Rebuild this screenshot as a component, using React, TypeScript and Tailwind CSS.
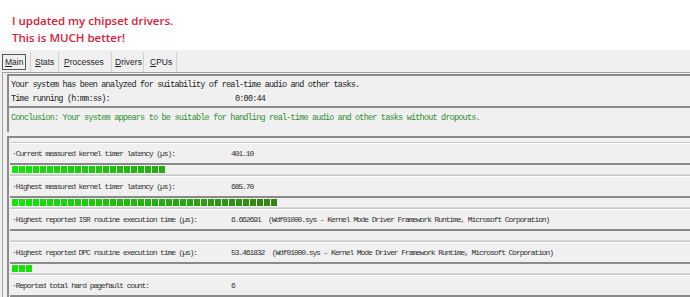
import React from "react";

const mono = { fontFamily: '"Liberation Mono", "DejaVu Sans Mono", monospace' };

function Bar({ n }: { n: number }) {
  const segs = [];
  for (let i = 0; i < n; i++) {
    const t = Math.min(i / 37, 1);
    const r = Math.round(20 + 30 * t);
    const g = Math.round(230 - 100 * t);
    const b = Math.round(10 + 10 * t);
    segs.push(
      <div key={i} className="h-full w-[6px] mr-px" style={{ backgroundColor: `rgb(${r},${g},${b})` }} />
    );
  }
  return (
    <div className="h-[12px] border-t-2 border-t-[#8a8a8a] border-b border-b-[#d8d8d8] bg-[#f0f0f0] flex items-stretch pl-[2px] py-px">
      {segs}
    </div>
  );
}

function Metric({ label, value, extra, bar }: { label: string; value: string; extra?: string; bar?: number }) {
  return (
    <div className="border-t border-t-[#c8c8c8]">
      <div className="border-t border-t-white h-[20px] flex items-center pl-[2px] text-[8px] tracking-[-1.1px] text-[#333]" style={mono}>
        <span className="w-[219px] shrink-0">·{label}</span>
        <span className="whitespace-pre">{value}{extra ? "  " + extra : ""}</span>
      </div>
      {bar !== undefined && <Bar n={bar} />}
    </div>
  );
}

export default function App() {
  return (
    <div className="w-[690px] h-[297px] overflow-hidden bg-white">
      <div className="h-[50px] pl-[12px] pt-[12px] text-[11.5px] font-semibold leading-[17px] text-[#d9203a]" style={{ fontFamily: '"Open Sans", "Noto Sans", sans-serif' }}>
        <div>I updated my chipset drivers.</div>
        <div>This is MUCH better!</div>
      </div>
      <div className="bg-[#f0f0f0] h-[247px]">
        <div className="h-[22px] flex items-end text-[8.5px] text-[#222]" style={{ fontFamily: '"Liberation Sans", Arial, sans-serif' }}>
          <div className="h-[20px] w-[31px] flex items-center pl-[2px] border-r border-r-[#d0d0d0]">
            <span className="border border-[#555] px-[2px] leading-[14px]"><u>M</u>ain</span>
          </div>
          <div className="h-[20px] w-[28px] flex items-center pl-[4px] border-r border-r-[#d0d0d0]"><u>S</u>tats</div>
          <div className="h-[20px] w-[53px] flex items-center pl-[5px] border-r border-r-[#d0d0d0]"><u>P</u>rocesses</div>
          <div className="h-[20px] w-[32px] flex items-center pl-[3px] border-r border-r-[#d0d0d0]"><u>D</u>rivers</div>
          <div className="h-[20px] w-[33px] flex items-center pl-[6px] border-r border-r-[#d0d0d0]"><u>C</u>PUs</div>
        </div>
        <div className="ml-[2px] border-l border-l-[#a0a0a0] border-t border-t-[#a0a0a0] h-[225px] pl-[4px] pt-[1px]">
          <div className="border-l-2 border-l-[#8a8a8a] border-t-2 border-t-[#8a8a8a] h-[32px] pl-[2px] pt-[2px] text-[8.5px] leading-[14px] tracking-[-0.8px] text-[#222]" style={mono}>
            <div>Your system has been analyzed for suitability of real-time audio and other tasks.</div>
            <div className="flex"><span className="w-[224px]">Time running (h:mm:ss):</span><span>0:00:44</span></div>
          </div>
          <div className="border-l-2 border-l-[#8a8a8a] border-t-2 border-t-[#8a8a8a] h-[26px] pl-[2px] pt-[3px] text-[8.5px] leading-[14px] tracking-[-0.8px] text-[#2f8f2f]" style={mono}>
            Conclusion: Your system appears to be suitable for handling real-time audio and other tasks without dropouts.
          </div>
          <div className="h-[4px]" />
          <div className="border-l-2 border-l-[#8a8a8a] border-t-2 border-t-[#8a8a8a] pl-[1px] pt-[4px]">
            <Metric label="Current measured kernel timer latency (µs):" value="401.10" bar={22} />
            <Metric label="Highest measured kernel timer latency (µs):" value="685.70" bar={38} />
            <Metric label="Highest reported ISR routine execution time (µs):" value="6.662691" extra="(Wdf01000.sys - Kernel Mode Driver Framework Runtime, Microsoft Corporation)" bar={0} />
            <Metric label="Highest reported DPC routine execution time (µs):" value="53.461832" extra="(Wdf01000.sys - Kernel Mode Driver Framework Runtime, Microsoft Corporation)" bar={3} />
            <Metric label="Reported total hard pagefault count:" value="6" bar={0} />
          </div>
        </div>
      </div>
    </div>
  );
}
